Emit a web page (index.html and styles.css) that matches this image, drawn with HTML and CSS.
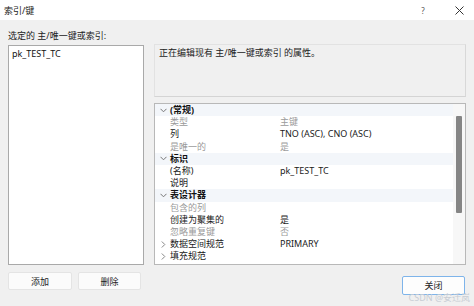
FILE: index.html
```html
<!DOCTYPE html>
<html lang="zh">
<head>
<meta charset="utf-8">
<title>索引/键</title>
<link rel="stylesheet" href="styles.css">
</head>
<body>
<div class="window">
  <div class="titlebar">
    <span class="title">索引/键</span>
    <span class="tb-help">?</span>
    <span class="tb-close">
      <svg width="9" height="9" viewBox="0 0 9 9"><path d="M0.5 0.5 L8.5 8.5 M8.5 0.5 L0.5 8.5" stroke="#333" stroke-width="1" fill="none"/></svg>
    </span>
  </div>
  <div class="main">
    <div class="leftcol">
      <div class="label">选定的 主/唯一键或索引:</div>
      <div class="listbox">
        <div class="listitem">pk_TEST_TC</div>
      </div>
      <div class="btnrow">
        <button class="btn">添加</button>
        <button class="btn">删除</button>
      </div>
    </div>
    <div class="rightcol">
      <div class="desc">正在编辑现有 主/唯一键或索引 的属性。</div>
      <div class="grid">
        <div class="rows">
          <div class="row group"><span class="chev"><svg width="7" height="5" viewBox="0 0 7 5"><polyline points="0.5,0.8 3.5,3.8 6.5,0.8" fill="none" stroke="#777" stroke-width="1"/></svg></span><span class="name">(常规)</span><span class="val"></span></div>
          <div class="row dis"><span class="chev"></span><span class="name">类型</span><span class="val">主键</span></div>
          <div class="row"><span class="chev"></span><span class="name">列</span><span class="val">TNO (ASC), CNO (ASC)</span></div>
          <div class="row dis"><span class="chev"></span><span class="name">是唯一的</span><span class="val">是</span></div>
          <div class="row group"><span class="chev"><svg width="7" height="5" viewBox="0 0 7 5"><polyline points="0.5,0.8 3.5,3.8 6.5,0.8" fill="none" stroke="#777" stroke-width="1"/></svg></span><span class="name">标识</span><span class="val"></span></div>
          <div class="row"><span class="chev"></span><span class="name">(名称)</span><span class="val">pk_TEST_TC</span></div>
          <div class="row"><span class="chev"></span><span class="name">说明</span><span class="val"></span></div>
          <div class="row group"><span class="chev"><svg width="7" height="5" viewBox="0 0 7 5"><polyline points="0.5,0.8 3.5,3.8 6.5,0.8" fill="none" stroke="#777" stroke-width="1"/></svg></span><span class="name">表设计器</span><span class="val"></span></div>
          <div class="row dis"><span class="chev"></span><span class="name">包含的列</span><span class="val"></span></div>
          <div class="row"><span class="chev"></span><span class="name">创建为聚集的</span><span class="val">是</span></div>
          <div class="row dis"><span class="chev"></span><span class="name">忽略重复键</span><span class="val">否</span></div>
          <div class="row"><span class="chev"><svg width="5" height="7" viewBox="0 0 5 7"><polyline points="0.8,0.5 3.8,3.5 0.8,6.5" fill="none" stroke="#888" stroke-width="1"/></svg></span><span class="name">数据空间规范</span><span class="val">PRIMARY</span></div>
          <div class="row"><span class="chev"><svg width="5" height="7" viewBox="0 0 5 7"><polyline points="0.8,0.5 3.8,3.5 0.8,6.5" fill="none" stroke="#888" stroke-width="1"/></svg></span><span class="name">填充规范</span><span class="val"></span></div>
        </div>
        <div class="scrollbar"><div class="thumb"></div></div>
      </div>
      <div class="closerow">
        <button class="btn close">关闭</button>
      </div>
    </div>
  </div>
  <div class="watermark">CSDN @安迁岚</div>
</div>
</body>
</html>
```

FILE: styles.css
```css
* { box-sizing: border-box; }
html, body {
  margin: 0;
  padding: 0;
  width: 474px;
  height: 306px;
  overflow: hidden;
  background: #f0f0f0;
  font-family: "Noto Sans", "Noto Sans CJK SC", sans-serif;
  font-size: 9px;
  color: #1a1a1a;
}
.window {
  position: relative;
  width: 474px;
  height: 306px;
  background: #f0f0f0;
}
.titlebar {
  height: 20px;
  background: #ffffff;
  display: flex;
  align-items: center;
  padding-left: 4px;
}
.title { flex: 1; font-size: 9px; color: #222; }
.tb-help { width: 10px; color: #555; font-size: 8px; margin-right: 24px; text-align: center; }
.tb-close { width: 14px; display: flex; align-items: center; justify-content: center; margin-right: 8px; }

.main {
  display: flex;
  padding: 0 8px;
  gap: 10px;
}
.leftcol {
  width: 136px;
  display: flex;
  flex-direction: column;
}
.label {
  padding-top: 9px;
  line-height: 14px;
  height: 23px;
  margin-bottom: 2px;
  color: #222;
}
.listbox {
  height: 220px;
  background: #ffffff;
  border: 1px solid #a9a9a9;
  padding: 2px 3px;
}
.listitem { line-height: 12px; color: #111; }
.btnrow {
  margin-top: 7px;
  display: flex;
  gap: 6px;
}
.btn {
  font-family: inherit;
  font-size: 9px;
  height: 18px;
  width: 64px;
  background: #fbfbfb;
  border: 1px solid #e4e4e4;
  border-radius: 2px;
  color: #222;
  padding: 0;
}
.btnrow .btn:last-child { width: 63px; }

.rightcol {
  width: 312px;
  display: flex;
  flex-direction: column;
}
.desc {
  margin-top: 24px;
  height: 53px;
  border: 1px solid #e2e2e2;
  border-right-color: #d8d8d8;
  border-bottom-color: #d4d4d4;
  padding: 2px 4px;
  line-height: 12px;
  color: #222;
}
.grid {
  margin-top: 6px;
  height: 162px;
  background: #ffffff;
  border: 1px solid #b8b8b8;
  display: flex;
}
.rows { flex: 1; }
.row {
  height: 12.2px;
  line-height: 12.2px;
  display: flex;
  align-items: center;
  white-space: nowrap;
}
.row.group {
  background: #f3f6fa;
  font-weight: bold;
  color: #111;
}
.chev {
  width: 15px;
  display: flex;
  justify-content: center;
  align-items: center;
  padding-left: 1px;
}
.name { width: 110px; }
.val { flex: 1; }
.row.dis { color: #9a9a9a; }
.scrollbar {
  width: 12px;
  background: #f7f7f7;
  padding: 12px 2px 0 3px;
}
.thumb {
  width: 6px;
  height: 97px;
  background: #858585;
  border-radius: 1px;
}
.closerow {
  display: flex;
  justify-content: flex-end;
  margin-top: 11px;
  padding-right: 1px;
}
.btn.close {
  width: 63px;
  height: 19px;
  background: #fdfdfd;
  border: 1px solid #7eb4ea;
  border-radius: 2px;
}
.watermark {
  position: absolute;
  right: 4px;
  bottom: 2px;
  font-size: 9px;
  color: #c8cdd4;
}
```
